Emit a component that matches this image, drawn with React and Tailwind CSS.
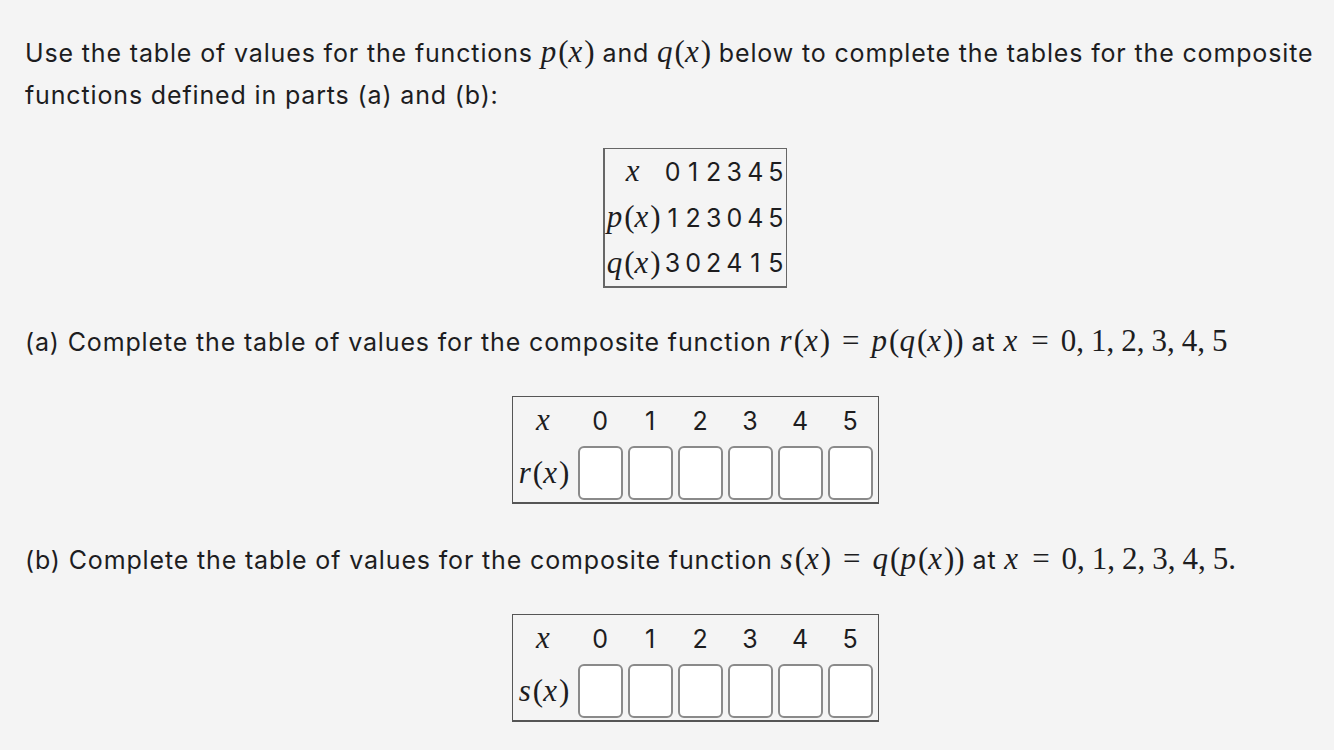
import React from "react"

const mathFont = { fontFamily: '"Liberation Serif", "DejaVu Serif", serif', letterSpacing: 0 }

// inline math, italic letters / upright digits
function M({ children, className = "" }) {
  return (
    <span className={`text-[31px] ${className}`} style={mathFont}>
      {children}
    </span>
  )
}

function I({ children }) {
  return <i className="mr-[2px] italic">{children}</i>
}

function Eq() {
  return <span className="px-[12px]">=</span>
}

const fx = (f) => (
  <>
    <I>{f}</I>(<I>x</I>)
  </>
)

const list = (
  <>
    0,<span className="ml-[7px]">1,</span>
    <span className="ml-[7px]">2,</span>
    <span className="ml-[7px]">3,</span>
    <span className="ml-[7px]">4,</span>
    <span className="ml-[7px]">5</span>
  </>
)

function ValuesTable() {
  const rows = [
    { label: <I>x</I>, vals: [0, 1, 2, 3, 4, 5] },
    { label: fx("p"), vals: [1, 2, 3, 0, 4, 5] },
    { label: fx("q"), vals: [3, 0, 2, 4, 1, 5] },
  ]
  return (
    <table className="border border-[#666] border-l-2 border-b-2 border-collapse">
      <tbody>
        {rows.map((r, i) => (
          <tr key={i} className="h-[46px]">
            <td className="text-center pl-[2px] pr-[2px]">
              <M>{r.label}</M>
            </td>
            {r.vals.map((v, j) => (
              <td key={j} className="px-[2px] text-center">
                {v}
              </td>
            ))}
          </tr>
        ))}
      </tbody>
    </table>
  )
}

function InputTable({ f }) {
  return (
    <div className="w-[367px] border border-[#555] border-b-2">
      <div className="flex h-[48px] items-center">
        <div className="w-[63px] text-center">
          <M>
            <I>x</I>
          </M>
        </div>
        {[0, 1, 2, 3, 4, 5].map((n) => (
          <div key={n} className="w-[50px] text-center">
            {n}
          </div>
        ))}
      </div>
      <div className="flex h-[57px] items-center">
        <div className="w-[63px] text-center">
          <M>{fx(f)}</M>
        </div>
        <div className="flex gap-[5px] pl-[2px]">
          {[0, 1, 2, 3, 4, 5].map((n) => (
            <input
              key={n}
              type="text"
              className="h-[54px] w-[45px] rounded-[6px] border-2 border-[#8a8a8a] bg-white outline-none"
            />
          ))}
        </div>
      </div>
    </div>
  )
}

export default function App() {
  return (
    <div
      className="min-h-screen bg-[#f4f4f4] pl-[25px] pt-[31px] text-[25px] leading-[42px] tracking-[0.85px] text-[#1d1d1f]"
      style={{ fontFamily: "Inter, 'Noto Sans', sans-serif" }}
    >
      <p className="whitespace-nowrap">
        Use the table of values for the functions <M>{fx("p")}</M> and <M>{fx("q")}</M> below to
        complete the tables for the composite
        <br />
        functions defined in parts (a) and (b):
      </p>

      <div className="mt-[32px] flex justify-center pl-[31px]">
        <ValuesTable />
      </div>

      <p className="mt-[32px] whitespace-nowrap">
        (a) Complete the table of values for the composite function{" "}
        <M>
          {fx("r")}
          <Eq />
          <I>p</I>(<I>q</I>(<I>x</I>))
        </M>{" "}
        at{" "}
        <M>
          <I>x</I>
          <Eq />
          {list}
        </M>
      </p>

      <div className="mt-[33px] flex justify-center pl-[31px]">
        <InputTable f="r" />
      </div>

      <p className="mt-[34px] whitespace-nowrap">
        (b) Complete the table of values for the composite function{" "}
        <M>
          {fx("s")}
          <Eq />
          <I>q</I>(<I>p</I>(<I>x</I>))
        </M>{" "}
        at{" "}
        <M>
          <I>x</I>
          <Eq />
          {list}.
        </M>
      </p>

      <div className="mt-[33px] flex justify-center pl-[31px]">
        <InputTable f="s" />
      </div>
    </div>
  )
}
